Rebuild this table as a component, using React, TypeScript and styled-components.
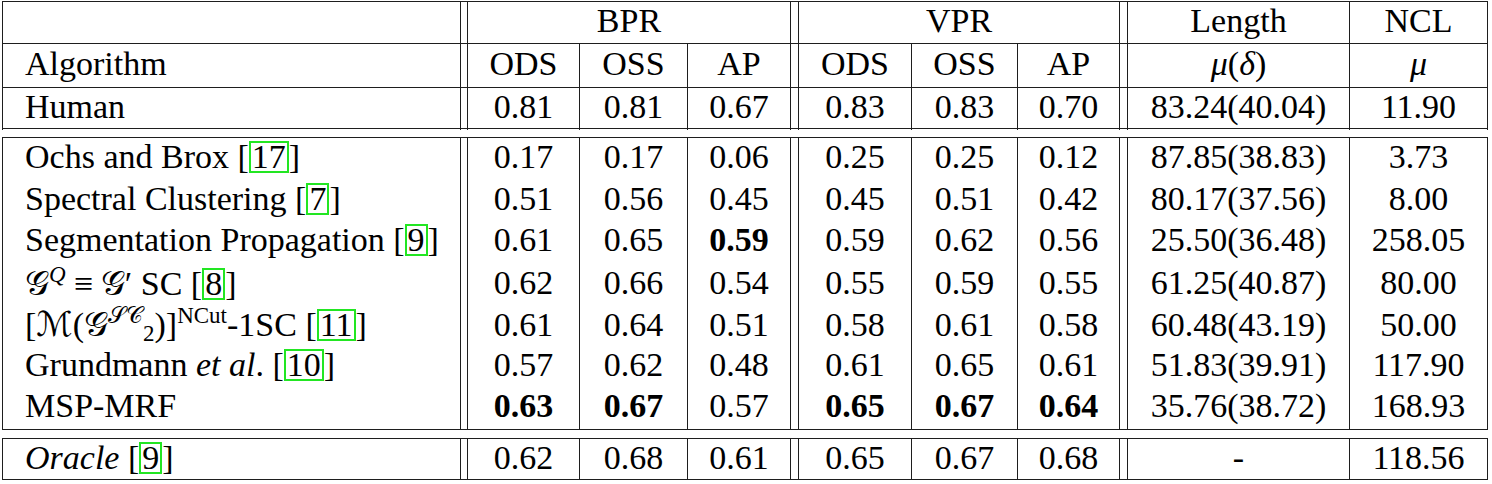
import React from 'react'
import styled, { createGlobalStyle } from 'styled-components'

const line = '#1e1e1e'
const serif = `'Liberation Serif', Tinos, 'Times New Roman', 'DejaVu Serif', serif`
const cols =
  '458px 7px 112px 108px 103px 8px 113px 106px 102px 8px 222px 139px'

interface ResultRow {
  key: string
  name: React.ReactNode
  scores: string[]
  bold?: number[]
  length: string
  ncl: string
}

const GlobalStyle = createGlobalStyle`
  body {
    margin: 0;
    background: #fff;
    color: #000;
    font-family: ${serif};
  }
`

const Table = styled.div`
  width: 1486px;
  margin: 1px 0 0 2px;
  font-family: ${serif};
  font-size: 34px;
`
const Section = styled.div<{ $gap?: boolean }>`
  border-top: 1px solid ${line};
  border-bottom: 1px solid ${line};
  margin-top: ${p => (p.$gap ? '8px' : '0')};
`
const Row = styled.div<{ $h: number; $rule?: boolean }>`
  display: grid;
  grid-template-columns: ${cols};
  box-sizing: border-box;
  height: ${p => p.$h}px;
  border-top: ${p => (p.$rule ? `1px solid ${line}` : 'none')};
`
const CellBox = styled.div<{ $left?: boolean; $span?: number; $end?: boolean }>`
  display: flex;
  align-items: center;
  justify-content: ${p => (p.$left ? 'flex-start' : 'center')};
  grid-column: ${p => (p.$span ? `span ${p.$span}` : 'auto')};
  box-sizing: border-box;
  border-left: 1px solid ${line};
  border-right: ${p => (p.$end ? `1px solid ${line}` : 'none')};
  padding: 0 0 4px ${p => (p.$left ? '22px' : '0')};
  white-space: nowrap;
  font-family: ${serif};
`
const DoubleRule = styled.div`
  border-left: 1px solid ${line};
`
const Bold = styled.span`
  font-weight: 700;
`
const Em = styled.span`
  font-style: italic;
`
const Cite = styled.span`
  display: inline-block;
  line-height: 28px;
  padding: 0 1px;
  border: 2px solid #22e622;
`
const Cal = styled.span`
  font-family: 'DejaVu Serif', 'DejaVu Sans', serif;
  font-style: normal;
  font-weight: 400;
`
const Sup = styled.span`
  font-size: 23px;
  line-height: 1;
  vertical-align: 13px;
`
const Sub = styled.span`
  font-size: 23px;
  line-height: 1;
  vertical-align: -5px;
`
const Op = styled.span`
  padding: 0 8px;
`

const Cell: React.FC<{
  left?: boolean
  span?: number
  end?: boolean
  children?: React.ReactNode
}> = ({ left, span, end, children }) => (
  <CellBox $left={left} $span={span} $end={end}>
    <span>{children}</span>
  </CellBox>
)

const results: ResultRow[] = [
  {
    key: 'ochs',
    name: <>Ochs and Brox [<Cite>17</Cite>]</>,
    scores: ['0.17', '0.17', '0.06', '0.25', '0.25', '0.12'],
    length: '87.85(38.83)',
    ncl: '3.73',
  },
  {
    key: 'spectral',
    name: <>Spectral Clustering [<Cite>7</Cite>]</>,
    scores: ['0.51', '0.56', '0.45', '0.45', '0.51', '0.42'],
    length: '80.17(37.56)',
    ncl: '8.00',
  },
  {
    key: 'segprop',
    name: <>Segmentation Propagation [<Cite>9</Cite>]</>,
    scores: ['0.61', '0.65', '0.59', '0.59', '0.62', '0.56'],
    bold: [2],
    length: '25.50(36.48)',
    ncl: '258.05',
  },
  {
    key: 'gq',
    name: (
      <>
        <Cal>𝒢</Cal>
        <Sup>
          <Em>Q</Em>
        </Sup>
        <Op>≡</Op>
        <Cal>𝒢</Cal>′ SC [<Cite>8</Cite>]
      </>
    ),
    scores: ['0.62', '0.66', '0.54', '0.55', '0.59', '0.55'],
    length: '61.25(40.87)',
    ncl: '80.00',
  },
  {
    key: 'ncut',
    name: (
      <>
        [<Cal>ℳ</Cal>(<Cal>𝒢</Cal>
        <Sup>
          <Cal>𝒮𝒞</Cal>
        </Sup>
        <Sub>2</Sub>)]<Sup>NCut</Sup>-1SC [<Cite>11</Cite>]
      </>
    ),
    scores: ['0.61', '0.64', '0.51', '0.58', '0.61', '0.58'],
    length: '60.48(43.19)',
    ncl: '50.00',
  },
  {
    key: 'grundmann',
    name: (
      <>
        Grundmann <Em>et al</Em>. [<Cite>10</Cite>]
      </>
    ),
    scores: ['0.57', '0.62', '0.48', '0.61', '0.65', '0.61'],
    length: '51.83(39.91)',
    ncl: '117.90',
  },
  {
    key: 'msp',
    name: 'MSP-MRF',
    scores: ['0.63', '0.67', '0.57', '0.65', '0.67', '0.64'],
    bold: [0, 1, 3, 4, 5],
    length: '35.76(38.72)',
    ncl: '168.93',
  },
]

const human: ResultRow = {
  key: 'human',
  name: 'Human',
  scores: ['0.81', '0.81', '0.67', '0.83', '0.83', '0.70'],
  length: '83.24(40.04)',
  ncl: '11.90',
}

const oracle: ResultRow = {
  key: 'oracle',
  name: (
    <>
      <Em>Oracle</Em> [<Cite>9</Cite>]
    </>
  ),
  scores: ['0.62', '0.68', '0.61', '0.65', '0.67', '0.68'],
  length: '-',
  ncl: '118.56',
}

const ResultLine: React.FC<{ row: ResultRow; h: number; rule?: boolean }> = ({
  row,
  h,
  rule,
}) => {
  const score = (i: number) =>
    row.bold?.includes(i) ? <Bold>{row.scores[i]}</Bold> : row.scores[i]
  return (
    <Row $h={h} $rule={rule}>
      <Cell left>{row.name}</Cell>
      <DoubleRule />
      <Cell>{score(0)}</Cell>
      <Cell>{score(1)}</Cell>
      <Cell>{score(2)}</Cell>
      <DoubleRule />
      <Cell>{score(3)}</Cell>
      <Cell>{score(4)}</Cell>
      <Cell>{score(5)}</Cell>
      <DoubleRule />
      <Cell>{row.length}</Cell>
      <Cell end>{row.ncl}</Cell>
    </Row>
  )
}

export default () => (
  <>
    <GlobalStyle />
    <Table>
      <Section>
        <Row $h={41}>
          <Cell />
          <DoubleRule />
          <Cell span={3}>BPR</Cell>
          <DoubleRule />
          <Cell span={3}>VPR</Cell>
          <DoubleRule />
          <Cell>Length</Cell>
          <Cell end>NCL</Cell>
        </Row>
        <Row $h={44} $rule>
          <Cell left>Algorithm</Cell>
          <DoubleRule />
          <Cell>ODS</Cell>
          <Cell>OSS</Cell>
          <Cell>AP</Cell>
          <DoubleRule />
          <Cell>ODS</Cell>
          <Cell>OSS</Cell>
          <Cell>AP</Cell>
          <DoubleRule />
          <Cell>
            <Em>μ</Em>(<Em>δ</Em>)
          </Cell>
          <Cell end>
            <Em>μ</Em>
          </Cell>
        </Row>
        <ResultLine row={human} h={41} rule />
      </Section>
      <Section $gap>
        {results.map(r => (
          <ResultLine key={r.key} row={r} h={291 / 7} />
        ))}
      </Section>
      <Section $gap>
        <ResultLine row={oracle} h={40} />
      </Section>
    </Table>
  </>
)
